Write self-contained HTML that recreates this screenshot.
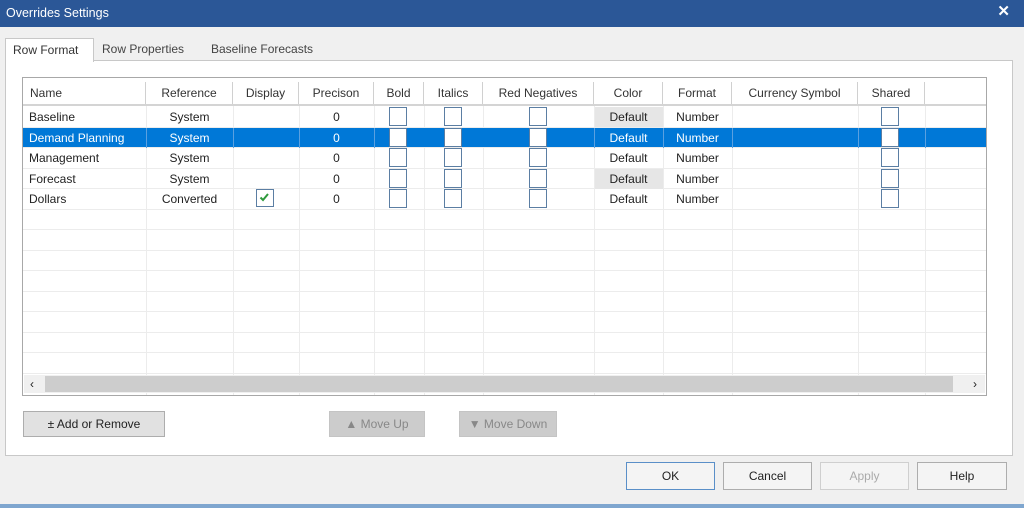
<!DOCTYPE html>
<html><head><meta charset="utf-8"><style>
*{box-sizing:border-box;margin:0;padding:0}
body{width:1024px;height:508px;overflow:hidden;background:#f0f0f0;font-family:"Liberation Sans",sans-serif;font-size:12px;color:#222;position:relative}
.abs{position:absolute}
.title{left:0;top:0;width:1024px;height:27px;background:#2b5797;color:#fff;font-size:12.5px;line-height:26px;padding-left:6px}
.x{right:14px;top:0;color:#fff;font-size:15px;line-height:24px;font-weight:bold}
.panel{left:5px;top:60px;width:1008px;height:396px;background:#fff;border:1px solid #c8c8c8}
.tab{top:38px;height:23px;line-height:22px;font-size:12px;color:#444}
.tab.act{left:5px;width:89px;background:#fff;border:1px solid #c8c8c8;border-bottom:none;padding-left:7px;height:24px;color:#333}
.grid{left:22px;top:77px;width:965px;height:319px;border:1px solid #a8a8a8;background:#fff;overflow:hidden}
.hdr{left:0;top:0;width:100%;height:28px;border-bottom:2px solid #d4d4d4}
.hc{position:absolute;top:4px;height:22px;line-height:22px;border-right:1px solid #d0d0d0;text-align:center;color:#333}
.row{position:absolute;left:0;width:100%;height:20.5px;border-bottom:1px solid #ececec}
.sel{background:#0078d7;color:#fff}
.vl{position:absolute;top:28px;bottom:0;width:1px;background:#ececec}
.cell{position:absolute;line-height:20px;text-align:center}
.cb{position:absolute;width:18px;height:19px;border:1.5px solid #5b7ea3;background:#fff}
.gray{background:#e6e6e6}
.scroll{left:1px;top:297px;width:961px;height:18px;background:#f0f0f0}
.thumb{left:21px;top:1px;width:908px;height:16px;background:#cdcdcd}
.btn{height:26px;line-height:24px;text-align:center;font-size:12px;border:1px solid #adadad;background:#e1e1e1}
</style></head><body>
<div class="abs title">Overrides Settings</div>
<div class="abs x">✕</div>
<div class="abs panel"></div>
<div class="abs tab act">Row Format</div>
<div class="abs tab" style="left:102px">Row Properties</div>
<div class="abs tab" style="left:211px">Baseline Forecasts</div>
<div class="abs grid">
 <div class="abs hdr">
  <div class="hc" style="left:0;width:123px;text-align:left;padding-left:7px">Name</div>
  <div class="hc" style="left:123px;width:87px">Reference</div>
  <div class="hc" style="left:210px;width:66px">Display</div>
  <div class="hc" style="left:276px;width:75px">Precison</div>
  <div class="hc" style="left:351px;width:50px">Bold</div>
  <div class="hc" style="left:401px;width:59px">Italics</div>
  <div class="hc" style="left:460px;width:111px">Red Negatives</div>
  <div class="hc" style="left:571px;width:69px">Color</div>
  <div class="hc" style="left:640px;width:69px">Format</div>
  <div class="hc" style="left:709px;width:126px">Currency Symbol</div>
  <div class="hc" style="left:835px;width:67px">Shared</div>
 </div>
 <div class="vl" style="left:123px"></div><div class="vl" style="left:210px"></div><div class="vl" style="left:276px"></div><div class="vl" style="left:351px"></div><div class="vl" style="left:401px"></div><div class="vl" style="left:460px"></div><div class="vl" style="left:571px"></div><div class="vl" style="left:640px"></div><div class="vl" style="left:709px"></div><div class="vl" style="left:835px"></div><div class="vl" style="left:902px"></div>
 <div class="row" style="top:29px"></div>
 <div class="row sel" style="top:49.5px"></div>
 <div class="row" style="top:70px"></div>
 <div class="row" style="top:90.5px"></div>
 <div class="row" style="top:111px"></div>
 <div class="row" style="top:131.5px"></div>
 <div class="row" style="top:152px"></div>
 <div class="row" style="top:172.5px"></div>
 <div class="row" style="top:193px"></div>
 <div class="row" style="top:213.5px"></div>
 <div class="row" style="top:234px"></div>
 <div class="row" style="top:254.5px"></div>
 <div class="row" style="top:275px"></div>
 <div class="abs" style="left:0;top:49.5px;width:100%;height:20px;pointer-events:none">
  <div class="abs" style="left:123px;top:0;width:1px;height:20px;background:#5aa0e0"></div><div class="abs" style="left:210px;top:0;width:1px;height:20px;background:#5aa0e0"></div><div class="abs" style="left:276px;top:0;width:1px;height:20px;background:#5aa0e0"></div><div class="abs" style="left:351px;top:0;width:1px;height:20px;background:#5aa0e0"></div><div class="abs" style="left:571px;top:0;width:1px;height:20px;background:#5aa0e0"></div><div class="abs" style="left:640px;top:0;width:1px;height:20px;background:#5aa0e0"></div><div class="abs" style="left:709px;top:0;width:1px;height:20px;background:#5aa0e0"></div><div class="abs" style="left:835px;top:0;width:1px;height:20px;background:#5aa0e0"></div><div class="abs" style="left:902px;top:0;width:1px;height:20px;background:#5aa0e0"></div>
 </div>
 <div class="abs gray" style="left:572px;top:29px;width:68px;height:20px"></div>
 <div class="abs gray" style="left:572px;top:90.5px;width:68px;height:20px"></div>
 <div class="cell" style="left:6px;top:29px;text-align:left">Baseline</div>
 <div class="cell" style="left:6px;top:49.5px;text-align:left;color:#fff">Demand Planning</div>
 <div class="cell" style="left:6px;top:70px;text-align:left">Management</div>
 <div class="cell" style="left:6px;top:90.5px;text-align:left">Forecast</div>
 <div class="cell" style="left:6px;top:111px;text-align:left">Dollars</div>
 <div class="cell" style="left:123px;width:87px;top:29px">System</div>
 <div class="cell" style="left:123px;width:87px;top:49.5px;color:#fff">System</div>
 <div class="cell" style="left:123px;width:87px;top:70px">System</div>
 <div class="cell" style="left:123px;width:87px;top:90.5px">System</div>
 <div class="cell" style="left:123px;width:87px;top:111px">Converted</div>
 <div class="cell" style="left:276px;width:75px;top:29px">0</div>
 <div class="cell" style="left:276px;width:75px;top:49.5px;color:#fff">0</div>
 <div class="cell" style="left:276px;width:75px;top:70px">0</div>
 <div class="cell" style="left:276px;width:75px;top:90.5px">0</div>
 <div class="cell" style="left:276px;width:75px;top:111px">0</div>
 <div class="cell" style="left:571px;width:69px;top:29px">Default</div>
 <div class="cell" style="left:571px;width:69px;top:49.5px;color:#fff">Default</div>
 <div class="cell" style="left:571px;width:69px;top:70px">Default</div>
 <div class="cell" style="left:571px;width:69px;top:90.5px">Default</div>
 <div class="cell" style="left:571px;width:69px;top:111px">Default</div>
 <div class="cell" style="left:640px;width:69px;top:29px">Number</div>
 <div class="cell" style="left:640px;width:69px;top:49.5px;color:#fff">Number</div>
 <div class="cell" style="left:640px;width:69px;top:70px">Number</div>
 <div class="cell" style="left:640px;width:69px;top:90.5px">Number</div>
 <div class="cell" style="left:640px;width:69px;top:111px">Number</div>
 <div class="cb" style="left:366px;top:29px"></div><div class="cb" style="left:366px;top:49.5px"></div><div class="cb" style="left:366px;top:70px"></div><div class="cb" style="left:366px;top:90.5px"></div><div class="cb" style="left:366px;top:111px"></div>
 <div class="cb" style="left:421px;top:29px"></div><div class="cb" style="left:421px;top:49.5px"></div><div class="cb" style="left:421px;top:70px"></div><div class="cb" style="left:421px;top:90.5px"></div><div class="cb" style="left:421px;top:111px"></div>
 <div class="cb" style="left:506px;top:29px"></div><div class="cb" style="left:506px;top:49.5px"></div><div class="cb" style="left:506px;top:70px"></div><div class="cb" style="left:506px;top:90.5px"></div><div class="cb" style="left:506px;top:111px"></div>
 <div class="cb" style="left:858px;top:29px"></div><div class="cb" style="left:858px;top:49.5px"></div><div class="cb" style="left:858px;top:70px"></div><div class="cb" style="left:858px;top:90.5px"></div><div class="cb" style="left:858px;top:111px"></div>
 <div class="cb" style="left:233px;top:111px;height:18px"><svg width="15" height="15" viewBox="0 0 15 15" style="position:absolute;left:0;top:0"><path d="M3.5 7.5 L6 10 L11 4" stroke="#2e9a3c" stroke-width="2" fill="none"/></svg></div>
 <div class="abs scroll"><div class="abs" style="left:6px;top:0;line-height:18px;font-size:12px">‹</div><div class="abs thumb"></div><div class="abs" style="right:8px;top:0;line-height:18px;font-size:12px">›</div></div>
</div>
<div class="abs btn" style="left:23px;top:411px;width:142px">± Add or Remove</div>
<div class="abs btn" style="left:329px;top:411px;width:96px;background:#cccccc;border-color:#c4c4c4;color:#888">▲ Move Up</div>
<div class="abs btn" style="left:459px;top:411px;width:98px;background:#cccccc;border-color:#c4c4c4;color:#888">▼ Move Down</div>
<div class="abs btn" style="left:626px;top:462px;width:89px;height:28px;line-height:26px;border:1px solid #5a8fc8;background:#f4f4f4">OK</div>
<div class="abs btn" style="left:723px;top:462px;width:89px;height:28px;line-height:26px;background:#f4f4f4">Cancel</div>
<div class="abs btn" style="left:820px;top:462px;width:89px;height:28px;line-height:26px;background:#f4f4f4;border-color:#cfcfcf;color:#aaa">Apply</div>
<div class="abs btn" style="left:917px;top:462px;width:90px;height:28px;line-height:26px;background:#f4f4f4">Help</div>
<div class="abs" style="left:0;top:504px;width:1024px;height:4px;background:#7fa6cf"></div>
</body></html>
